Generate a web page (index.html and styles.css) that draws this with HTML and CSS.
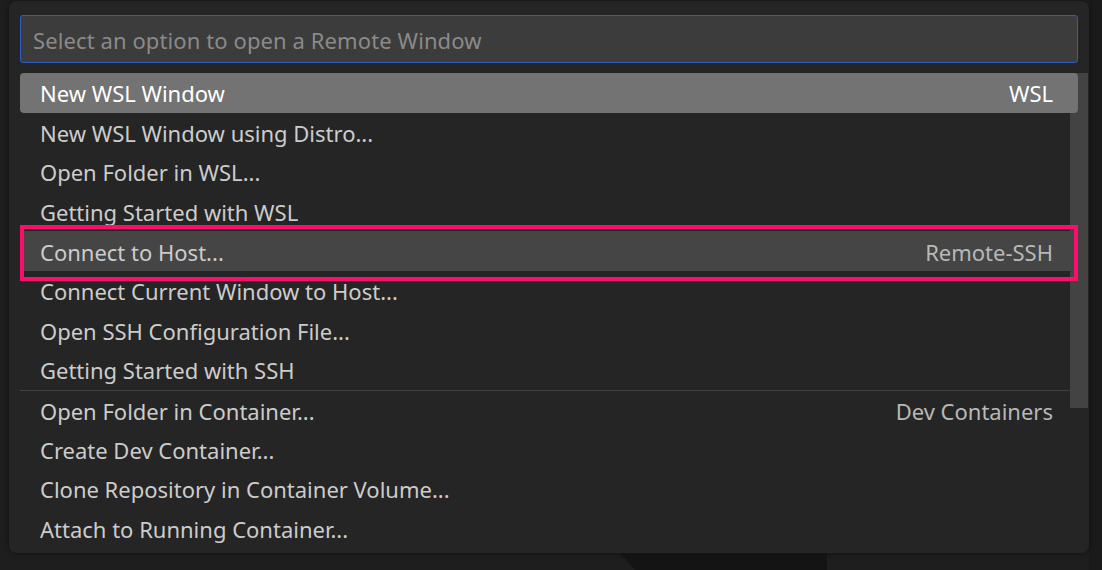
FILE: index.html
```html
<!DOCTYPE html>
<html>
<head>
<meta charset="utf-8">
<link rel="stylesheet" href="styles.css">
</head>
<body>
<div class="screen">
  <div class="panel">
    <div class="input-box">
      <span class="placeholder">Select an option to open a Remote Window</span>
    </div>
    <div class="list">
      <div class="scrollbar"></div>
      <div class="row selected"><span class="label">New WSL Window</span><span class="desc">WSL</span></div>
      <div class="row"><span class="label">New WSL Window using Distro...</span></div>
      <div class="row"><span class="label">Open Folder in WSL...</span></div>
      <div class="row"><span class="label">Getting Started with WSL</span></div>
      <div class="row hovered"><span class="label">Connect to Host...</span><span class="desc">Remote-SSH</span><div class="highlight"></div></div>
      <div class="row"><span class="label">Connect Current Window to Host...</span></div>
      <div class="row"><span class="label">Open SSH Configuration File...</span></div>
      <div class="row"><span class="label">Getting Started with SSH</span></div>
      <div class="row sep"><span class="label">Open Folder in Container...</span><span class="desc">Dev Containers</span></div>
      <div class="row tight"><span class="label">Create Dev Container...</span></div>
      <div class="row"><span class="label">Clone Repository in Container Volume...</span></div>
      <div class="row"><span class="label">Attach to Running Container...</span></div>
    </div>
  </div>
  <div class="below">
    <div class="dark-shape"></div>
  </div>
</div>
</body>
</html>
```
FILE: styles.css
```css
html, body {
  margin: 0;
  padding: 0;
  background: #1e1e1e;
  width: 1102px;
  height: 570px;
  overflow: hidden;
}
.screen {
  width: 1102px;
  height: 570px;
  display: flex;
  flex-direction: column;
  font-family: "Noto Sans", "Open Sans", sans-serif;
  background: linear-gradient(to right, #1e1e1e 0, #1e1e1e 1089px, #1a1a1a 1089px);
}
.panel {
  margin: 1px 0 0 9px;
  width: 1080px;
  height: 552px;
  box-sizing: border-box;
  background: #252525;
  border-radius: 8px;
  box-shadow: 0 0 6px rgba(0, 0, 0, 0.45);
  padding: 14px 11px 0 11px;
  position: relative;
}
.input-box {
  height: 48px;
  box-sizing: border-box;
  border: 1px solid #2f5cc0;
  border-radius: 3px;
  background: #3c3c3c;
  display: flex;
  align-items: center;
  padding: 1px 0 0 12px;
}
.placeholder {
  color: #8a8a8a;
  font-size: 22px;
  letter-spacing: 0.1px;
}
.list {
  margin-top: 10px;
  width: 1058px;
  position: relative;
}
.scrollbar {
  position: absolute;
  left: 1050px;
  top: 0;
  width: 18px;
  height: 335px;
  background: #434343;
}
.row {
  position: relative;
  height: 39.6px;
  box-sizing: border-box;
  display: flex;
  align-items: center;
  justify-content: space-between;
  padding: 1px 25px 0 20px;
  color: #cccccc;
  font-size: 22px;
  border-radius: 4px;
}
.row.selected {
  background: #737373;
  color: #ffffff;
}
.row.selected .desc {
  color: #ffffff;
}
.row.hovered {
  background: #454545;
  border-radius: 0;
}
.desc {
  color: #b8b8b8;
}
.row.sep {
  margin-top: 1px;
}
.row.tight {
  height: 38.6px;
}
.row.sep::before {
  content: "";
  position: absolute;
  left: 0;
  right: 2px;
  top: -1px;
  height: 1px;
  background: #404040;
}
.highlight {
  position: absolute;
  left: 0;
  right: 0;
  top: -6px;
  bottom: -10px;
  border: 4px solid #fa0f6c;
  pointer-events: none;
}
.below {
  flex: 1;
  display: flex;
}
.dark-shape {
  margin-left: 620px;
  width: 207px;
  height: 100%;
  background: #141414;
  clip-path: polygon(0 0, 100% 0, 100% 100%, 15px 100%);
}
```
